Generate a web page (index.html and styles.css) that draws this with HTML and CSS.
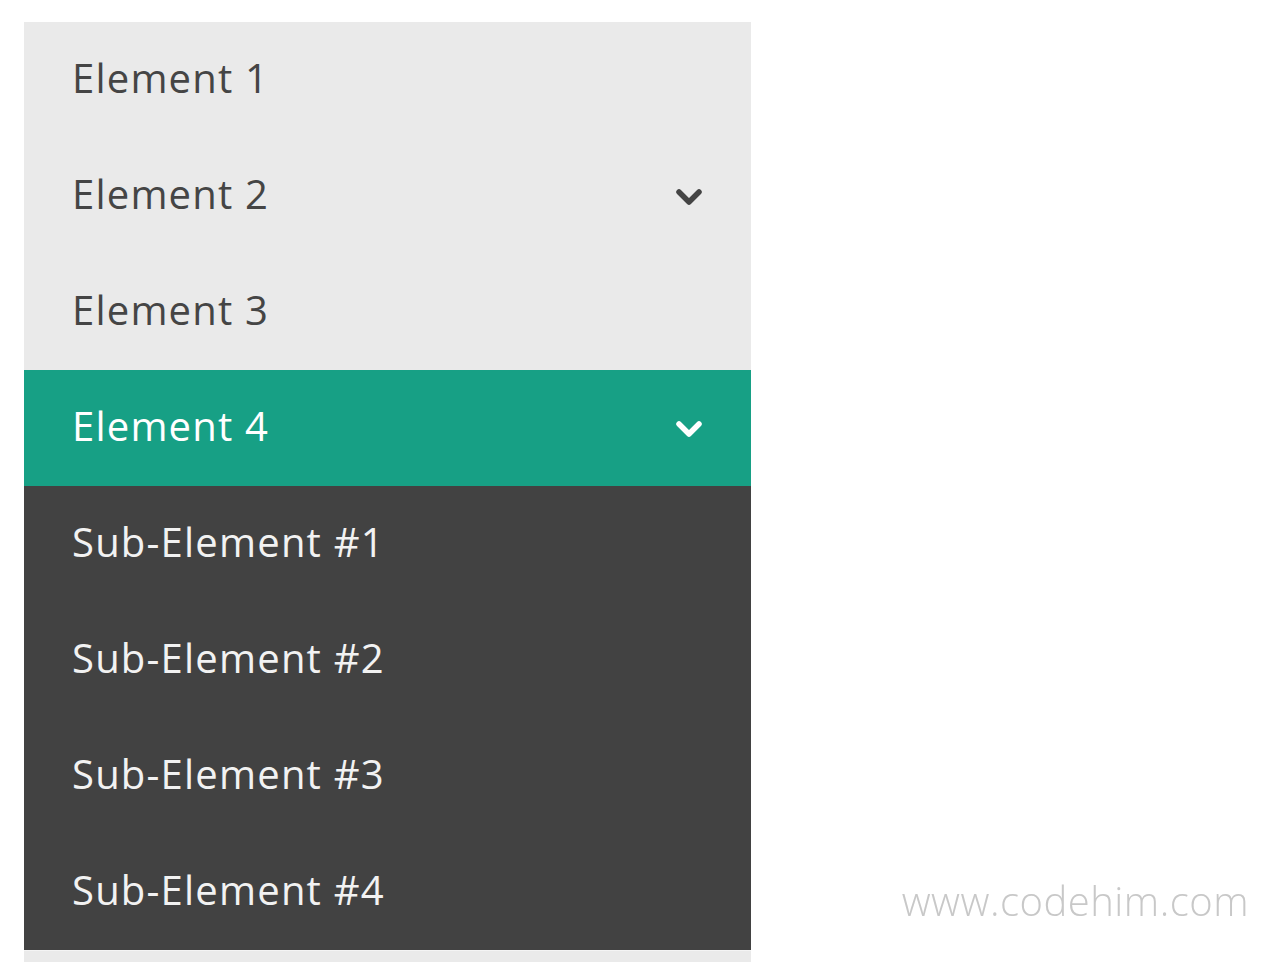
FILE: index.html
```html
<!DOCTYPE html>
<html lang="en">
<head>
    <meta charset="UTF-8">
    <meta name="viewport" content="width=device-width, initial-scale=1.0">
    <title>Accordion Menu</title>
    <link rel="stylesheet" href="styles.css">
</head>
<body>
    <ul id="accordion">
        <li class="item"><a href="#">Element 1</a></li>
        <li class="item has-sub">
            <a href="#">Element 2
                <svg class="chevron" viewBox="0 0 28 20"><path d="M4 5 L14 15 L24 5"/></svg>
            </a>
        </li>
        <li class="item"><a href="#">Element 3</a></li>
        <li class="item has-sub open">
            <a href="#">Element 4
                <svg class="chevron" viewBox="0 0 28 20"><path d="M4 5 L14 15 L24 5"/></svg>
            </a>
            <ul class="submenu">
                <li><a href="#">Sub-Element #1</a></li>
                <li><a href="#">Sub-Element #2</a></li>
                <li><a href="#">Sub-Element #3</a></li>
                <li><a href="#">Sub-Element #4</a></li>
            </ul>
        </li>
        <!-- next row, only its top edge is visible -->
        <li class="item peek"></li>
    </ul>

    <div class="watermark">www.codehim.com</div>
</body>
</html>
```

FILE: styles.css
```css
html, body {
    height: 100%;
}

body {
    margin: 0;
    padding: 22px 24px 0;
    box-sizing: border-box;
    background: #fff;
    font-family: "Open Sans", "DejaVu Sans", sans-serif;
    overflow: hidden;
}

#accordion {
    list-style: none;
    margin: 0;
    padding: 0;
    width: 727px;
}

#accordion a {
    display: flex;
    align-items: center;
    justify-content: space-between;
    height: 116px;
    padding: 0 48px 6px 48px;
    box-sizing: border-box;
    text-decoration: none;
    font-size: 40px;
    letter-spacing: 1.2px;
}

.item > a {
    background: #eaeaea;
    color: #454545;
}

.item.open > a {
    background: #17a085;
    color: #fff;
}

.item.peek {
    height: 12px;
    background: #eaeaea;
    border-top: 1px solid #f4f4f4;
}

.chevron {
    width: 28px;
    height: 20px;
    margin-top: 8px;
}

.chevron path {
    fill: none;
    stroke: #444;
    stroke-width: 5.5;
    stroke-linecap: round;
    stroke-linejoin: round;
}

.open .chevron path {
    stroke: #fff;
}

.submenu {
    list-style: none;
    margin: 0;
    padding: 0;
    background: #424242;
}

.submenu a {
    color: #f2f2f2;
}

.watermark {
    position: fixed;
    right: 31px;
    bottom: 34px;
    font-family: "Open Sans", sans-serif;
    font-weight: 300;
    font-size: 40px;
    color: #c8c8c8;
    letter-spacing: 0.5px;
}
```
